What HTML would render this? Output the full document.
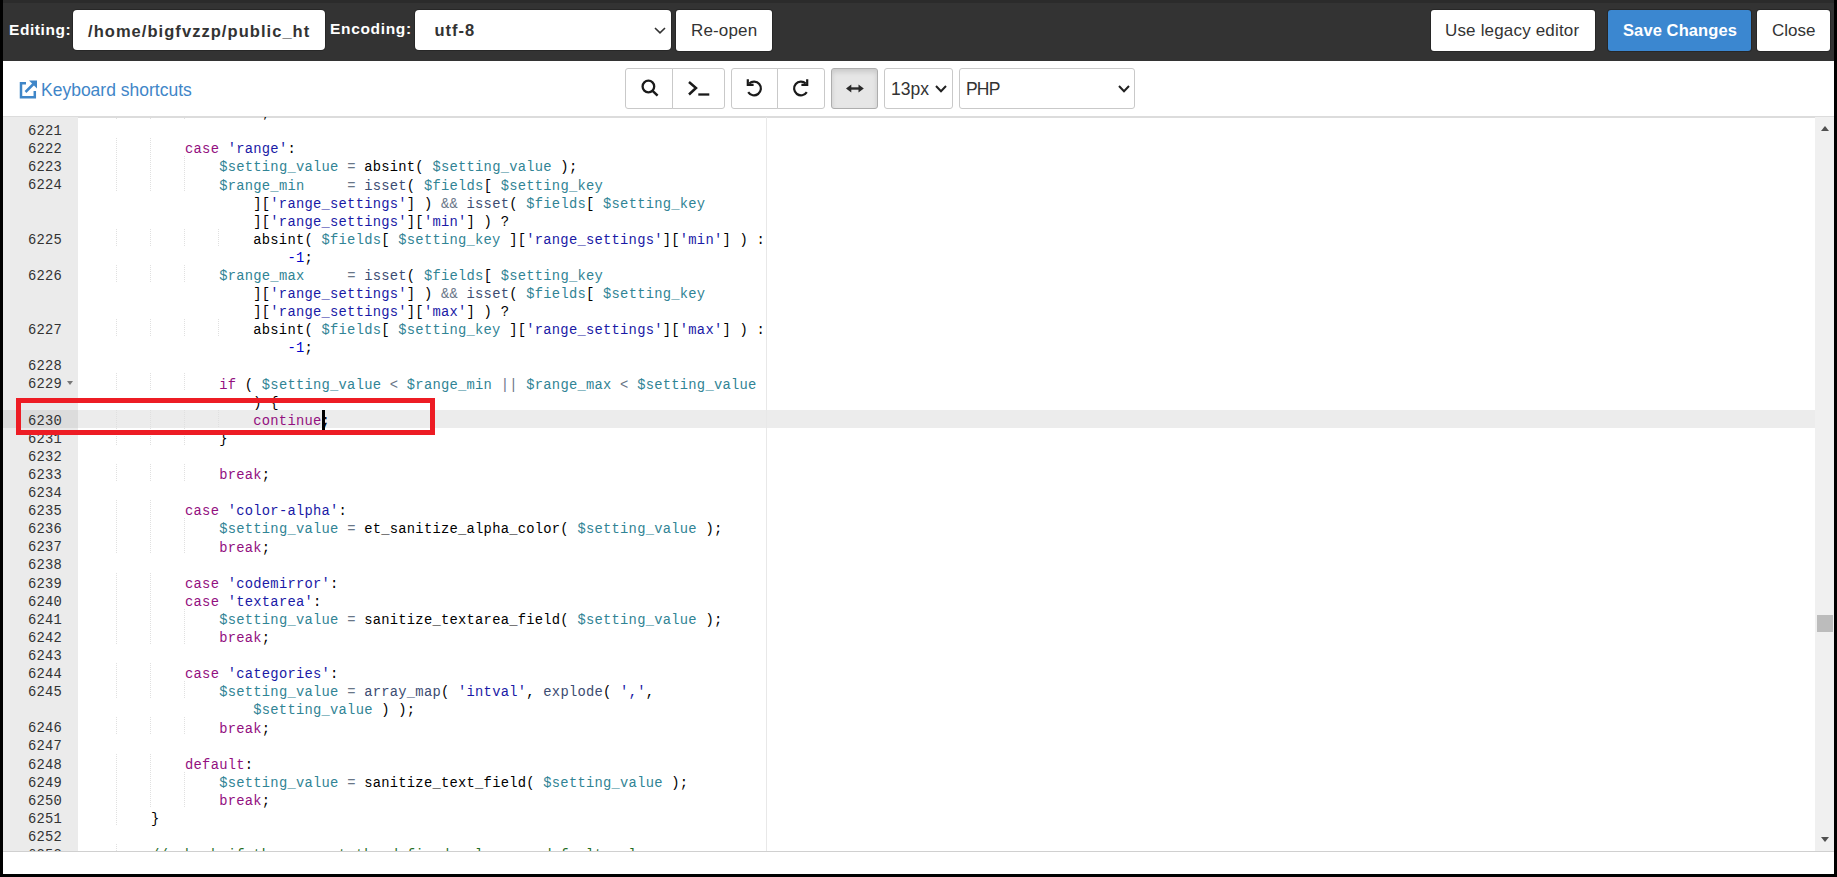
<!DOCTYPE html>
<html><head><meta charset="utf-8">
<style>
*{box-sizing:border-box}
html,body{margin:0;padding:0;width:1837px;height:877px;overflow:hidden;background:#fff}
body{position:relative;font-family:"Liberation Sans",sans-serif}
.abs{position:absolute}
#bl{position:absolute;left:0;top:0;width:3px;height:877px;background:#000}
#br{position:absolute;left:1834px;top:0;width:3px;height:877px;background:#000}
#bb{position:absolute;left:0;top:874px;width:1837px;height:3px;background:#000}
#hdr{position:absolute;left:3px;top:0;width:1831px;height:61px;background:#333}
#hdrtop{position:absolute;left:3px;top:0;width:1831px;height:3px;background:#2b2b2b}
.t{position:absolute;white-space:nowrap;line-height:1}
.lbl{color:#fff;font-weight:bold}
.box{position:absolute;background:#fff;border-radius:4px;box-shadow:0 0 0 1px #272727}
.btn{position:absolute;background:#fff;border-radius:3px;box-shadow:0 0 0 1px #272727}
.tbtn{position:absolute;border:1px solid #c9c9c9;background:#fff}
#tbline{position:absolute;left:3px;top:116px;width:1831px;height:2px;background:#dcdcdc}
#gutter{position:absolute;left:3px;top:117px;width:75px;height:734px;background:#ebebeb;overflow:hidden}
.g{position:absolute;left:0;width:75px;height:18.1px}
.g span{position:absolute;right:16px;top:3px;font-family:"Liberation Mono",monospace;font-size:13.8px;letter-spacing:0.25px;line-height:18.1px;color:#333}
.g.act{background:#dcdcdc}
.fold{position:absolute;left:64px;top:8px;width:0;height:0;border-left:3.5px solid transparent;border-right:3.5px solid transparent;border-top:4px solid #777}
#code{position:absolute;left:78px;top:117px;width:1737px;height:734px;overflow:hidden}
.actline{position:absolute;left:0;width:1737px;height:18.1px;background:#ececec}
.pm{position:absolute;left:688px;top:0;width:1px;height:734px;background:#e8e8e8}
.row{position:absolute;left:4.7px;height:18.1px;white-space:pre;font-family:"Liberation Mono",monospace;font-size:13.8px;letter-spacing:0.25px;line-height:18.1px;color:#000}
.ig{position:absolute;width:1px;height:18.1px;background-image:linear-gradient(#e0e0e0 50%,transparent 50%);background-size:1px 2px}
i{font-style:normal}
i.kw{color:#93107f} i.str{color:#1a1aa6} i.var{color:#318495} i.num{color:#0000cd} i.op{color:#687687} i.fn{color:#3c4c72} i.com{color:#236e24}
#sb{position:absolute;left:1815px;top:117px;width:19px;height:734px;background:#f0f0f0}
#sbthumb{position:absolute;left:2px;top:498px;width:16px;height:17px;background:#bcbcbc}
.arr{position:absolute;left:5.5px;width:0;height:0;border-left:4.5px solid transparent;border-right:4.5px solid transparent}
#cursor{position:absolute;width:2.5px;height:19.5px;background:#000}
#redbox{position:absolute;left:16px;top:398px;width:419px;height:37px;border:5px solid #ed1c24}
#botline{position:absolute;left:3px;top:851px;width:1831px;height:1px;background:#d0d0d0}
</style></head><body>
<div id="hdr"></div>
<div id="hdrtop"></div>
<div class="t lbl" style="left:9px;top:22px;font-size:15.5px;letter-spacing:0.58px">Editing:</div>
<div class="box" style="left:73px;top:10px;width:252px;height:40px"></div>
<div class="t" style="left:88px;top:22px;font-weight:bold;font-size:16.5px;color:#333;letter-spacing:1.05px;line-height:18px">/home/bigfvzzp/public_ht</div>
<div class="t lbl" style="left:330px;top:21px;font-size:15.5px;letter-spacing:0.67px">Encoding:</div>
<div class="box" style="left:415px;top:10px;width:256px;height:40px"></div>
<div class="t" style="left:434.5px;top:22px;font-weight:bold;font-size:16.5px;color:#333;letter-spacing:0.98px">utf-8</div>
<svg class="abs" style="left:653px;top:26px" width="14" height="9" viewBox="0 0 14 9"><path d="M2 2 L7 6.8 L12 2" fill="none" stroke="#333" stroke-width="1.6"/></svg>
<div class="btn" style="left:676px;top:10px;width:96px;height:41px"></div>
<div class="t" style="left:691px;top:22px;font-size:17px;color:#333;letter-spacing:0.15px">Re-open</div>
<div class="btn" style="left:1431px;top:10px;width:164px;height:41px"></div>
<div class="t" style="left:1445px;top:22px;font-size:17px;color:#333;letter-spacing:0.17px">Use legacy editor</div>
<div class="btn" style="left:1608px;top:10px;width:143px;height:41px;background:#3b87d0"></div>
<div class="t" style="left:1623px;top:22px;font-size:16.5px;font-weight:bold;color:#fff;letter-spacing:0.1px">Save Changes</div>
<div class="btn" style="left:1757px;top:10px;width:73px;height:41px"></div>
<div class="t" style="left:1772px;top:22px;font-size:17px;color:#333">Close</div>

<svg class="abs" style="left:18px;top:79px" width="20" height="20" viewBox="0 0 20 20"><path d="M8 4.3 H3 V18.2 H16.8 V12" fill="none" stroke="#3f86c8" stroke-width="2.5"/><path d="M7.5 13 L17 3.5" fill="none" stroke="#3f86c8" stroke-width="2.5"/><path d="M11 1.5 H19 V9.5 Z" fill="#3f86c8"/></svg>
<div class="t" style="left:41px;top:81.5px;font-size:17.5px;color:#3f86c8">Keyboard shortcuts</div>

<div class="tbtn" style="left:625px;top:68px;width:48px;height:41px;border-radius:3px 0 0 3px"></div>
<div class="tbtn" style="left:672px;top:68px;width:53px;height:41px;border-radius:0 3px 3px 0"></div>
<svg class="abs" style="left:638px;top:76px" width="24" height="24" viewBox="0 0 24 24"><circle cx="10.4" cy="10.5" r="5.8" fill="none" stroke="#1a1a1a" stroke-width="2.3"/><path d="M14.6 14.8 L19.6 19.6" stroke="#1a1a1a" stroke-width="2.5"/></svg>
<svg class="abs" style="left:684px;top:76px" width="30" height="24" viewBox="0 0 30 24"><path d="M5 6 L12 12 L5 18.5" fill="none" stroke="#1a1a1a" stroke-width="2.5"/><path d="M14.3 18.5 H25.3" stroke="#1a1a1a" stroke-width="2.3"/></svg>

<div class="tbtn" style="left:731px;top:68px;width:47px;height:41px;border-radius:3px 0 0 3px"></div>
<div class="tbtn" style="left:777px;top:68px;width:48px;height:41px;border-radius:0 3px 3px 0"></div>
<svg class="abs" style="left:742px;top:76px" width="24" height="24" viewBox="0 0 24 24"><path d="M7.2 7.5 A 6.9 6.9 0 1 1 6.2 16.2" fill="none" stroke="#1a1a1a" stroke-width="2.2"/><path d="M5.8 3.2 V8.8 H11.6" fill="none" stroke="#1a1a1a" stroke-width="2.2"/></svg>
<svg class="abs" style="left:789px;top:76px" width="24" height="24" viewBox="0 0 24 24"><path d="M16.8 7.5 A 6.9 6.9 0 1 0 17.8 16.2" fill="none" stroke="#1a1a1a" stroke-width="2.2"/><path d="M18.2 3.2 V8.8 H12.4" fill="none" stroke="#1a1a1a" stroke-width="2.2"/></svg>

<div class="tbtn" style="left:831px;top:68px;width:47px;height:41px;border-radius:3px;background:#e6e6e6;border-color:#adadad;box-shadow:inset 0 3px 5px rgba(0,0,0,.125)"></div>
<svg class="abs" style="left:843px;top:77px" width="24" height="24" viewBox="0 0 24 24"><path d="M6 11.5 H18" stroke="#2b2b2b" stroke-width="2.4"/><path d="M3 11.5 L8.3 7.6 V15.4 Z M20.8 11.5 L15.5 7.6 V15.4 Z" fill="#2b2b2b"/></svg>

<div class="tbtn" style="left:884px;top:68px;width:69px;height:41px;border-radius:3px"></div>
<div class="t" style="left:891px;top:81px;font-size:17.5px;color:#333">13px</div>
<svg class="abs" style="left:934px;top:83px" width="14" height="11" viewBox="0 0 14 11"><path d="M2 3 L7 8.2 L12 3" fill="none" stroke="#222" stroke-width="2"/></svg>
<div class="tbtn" style="left:959px;top:68px;width:176px;height:41px;border-radius:3px"></div>
<div class="t" style="left:966px;top:81px;font-size:17.5px;color:#333;letter-spacing:-0.8px">PHP</div>
<svg class="abs" style="left:1117px;top:83px" width="14" height="11" viewBox="0 0 14 11"><path d="M2 3 L7 8.2 L12 3" fill="none" stroke="#222" stroke-width="2"/></svg>

<div id="tbline"></div>
<div id="gutter">
<div class="g" style="top:-15.10px"><span>6220</span></div>
<div class="g" style="top:3.00px"><span>6221</span></div>
<div class="g" style="top:21.10px"><span>6222</span></div>
<div class="g" style="top:39.20px"><span>6223</span></div>
<div class="g" style="top:57.30px"><span>6224</span></div>
<div class="g" style="top:111.60px"><span>6225</span></div>
<div class="g" style="top:147.80px"><span>6226</span></div>
<div class="g" style="top:202.10px"><span>6227</span></div>
<div class="g" style="top:238.30px"><span>6228</span></div>
<div class="g" style="top:256.40px"><span>6229</span><b class="fold"></b></div>
<div class="g act" style="top:292.60px"><span>6230</span></div>
<div class="g" style="top:310.70px"><span>6231</span></div>
<div class="g" style="top:328.80px"><span>6232</span></div>
<div class="g" style="top:346.90px"><span>6233</span></div>
<div class="g" style="top:365.00px"><span>6234</span></div>
<div class="g" style="top:383.10px"><span>6235</span></div>
<div class="g" style="top:401.20px"><span>6236</span></div>
<div class="g" style="top:419.30px"><span>6237</span></div>
<div class="g" style="top:437.40px"><span>6238</span></div>
<div class="g" style="top:455.50px"><span>6239</span></div>
<div class="g" style="top:473.60px"><span>6240</span></div>
<div class="g" style="top:491.70px"><span>6241</span></div>
<div class="g" style="top:509.80px"><span>6242</span></div>
<div class="g" style="top:527.90px"><span>6243</span></div>
<div class="g" style="top:546.00px"><span>6244</span></div>
<div class="g" style="top:564.10px"><span>6245</span></div>
<div class="g" style="top:600.30px"><span>6246</span></div>
<div class="g" style="top:618.40px"><span>6247</span></div>
<div class="g" style="top:636.50px"><span>6248</span></div>
<div class="g" style="top:654.60px"><span>6249</span></div>
<div class="g" style="top:672.70px"><span>6250</span></div>
<div class="g" style="top:690.80px"><span>6251</span></div>
<div class="g" style="top:708.90px"><span>6252</span></div>
<div class="g" style="top:727.00px"><span>6253</span></div>
</div>
<div id="code">
 <div class="actline" style="top:292.6px"></div>
 <div class="pm"></div>
<div class="ig" style="left:37.62px;top:-15.10px"></div>
<div class="ig" style="left:71.74px;top:-15.10px"></div>
<div class="ig" style="left:105.86px;top:-15.10px"></div>
<div class="ig" style="left:37.62px;top:21.10px"></div>
<div class="ig" style="left:71.74px;top:21.10px"></div>
<div class="ig" style="left:37.62px;top:39.20px"></div>
<div class="ig" style="left:71.74px;top:39.20px"></div>
<div class="ig" style="left:105.86px;top:39.20px"></div>
<div class="ig" style="left:37.62px;top:57.30px"></div>
<div class="ig" style="left:71.74px;top:57.30px"></div>
<div class="ig" style="left:105.86px;top:57.30px"></div>
<div class="ig" style="left:37.62px;top:111.60px"></div>
<div class="ig" style="left:71.74px;top:111.60px"></div>
<div class="ig" style="left:105.86px;top:111.60px"></div>
<div class="ig" style="left:139.98px;top:111.60px"></div>
<div class="ig" style="left:37.62px;top:147.80px"></div>
<div class="ig" style="left:71.74px;top:147.80px"></div>
<div class="ig" style="left:105.86px;top:147.80px"></div>
<div class="ig" style="left:37.62px;top:202.10px"></div>
<div class="ig" style="left:71.74px;top:202.10px"></div>
<div class="ig" style="left:105.86px;top:202.10px"></div>
<div class="ig" style="left:139.98px;top:202.10px"></div>
<div class="ig" style="left:37.62px;top:256.40px"></div>
<div class="ig" style="left:71.74px;top:256.40px"></div>
<div class="ig" style="left:105.86px;top:256.40px"></div>
<div class="ig" style="left:37.62px;top:292.60px"></div>
<div class="ig" style="left:71.74px;top:292.60px"></div>
<div class="ig" style="left:105.86px;top:292.60px"></div>
<div class="ig" style="left:139.98px;top:292.60px"></div>
<div class="ig" style="left:37.62px;top:310.70px"></div>
<div class="ig" style="left:71.74px;top:310.70px"></div>
<div class="ig" style="left:105.86px;top:310.70px"></div>
<div class="ig" style="left:37.62px;top:346.90px"></div>
<div class="ig" style="left:71.74px;top:346.90px"></div>
<div class="ig" style="left:105.86px;top:346.90px"></div>
<div class="ig" style="left:37.62px;top:383.10px"></div>
<div class="ig" style="left:71.74px;top:383.10px"></div>
<div class="ig" style="left:37.62px;top:401.20px"></div>
<div class="ig" style="left:71.74px;top:401.20px"></div>
<div class="ig" style="left:105.86px;top:401.20px"></div>
<div class="ig" style="left:37.62px;top:419.30px"></div>
<div class="ig" style="left:71.74px;top:419.30px"></div>
<div class="ig" style="left:105.86px;top:419.30px"></div>
<div class="ig" style="left:37.62px;top:455.50px"></div>
<div class="ig" style="left:71.74px;top:455.50px"></div>
<div class="ig" style="left:37.62px;top:473.60px"></div>
<div class="ig" style="left:71.74px;top:473.60px"></div>
<div class="ig" style="left:37.62px;top:491.70px"></div>
<div class="ig" style="left:71.74px;top:491.70px"></div>
<div class="ig" style="left:105.86px;top:491.70px"></div>
<div class="ig" style="left:37.62px;top:509.80px"></div>
<div class="ig" style="left:71.74px;top:509.80px"></div>
<div class="ig" style="left:105.86px;top:509.80px"></div>
<div class="ig" style="left:37.62px;top:546.00px"></div>
<div class="ig" style="left:71.74px;top:546.00px"></div>
<div class="ig" style="left:37.62px;top:564.10px"></div>
<div class="ig" style="left:71.74px;top:564.10px"></div>
<div class="ig" style="left:105.86px;top:564.10px"></div>
<div class="ig" style="left:37.62px;top:600.30px"></div>
<div class="ig" style="left:71.74px;top:600.30px"></div>
<div class="ig" style="left:105.86px;top:600.30px"></div>
<div class="ig" style="left:37.62px;top:636.50px"></div>
<div class="ig" style="left:71.74px;top:636.50px"></div>
<div class="ig" style="left:37.62px;top:654.60px"></div>
<div class="ig" style="left:71.74px;top:654.60px"></div>
<div class="ig" style="left:105.86px;top:654.60px"></div>
<div class="ig" style="left:37.62px;top:672.70px"></div>
<div class="ig" style="left:71.74px;top:672.70px"></div>
<div class="ig" style="left:105.86px;top:672.70px"></div>
<div class="ig" style="left:37.62px;top:690.80px"></div>
<div class="ig" style="left:37.62px;top:727.00px"></div>
<div class="row" style="top:-11.90px">                <i class="kw">break</i>;</div>
<div class="row" style="top:6.20px"></div>
<div class="row" style="top:24.30px">            <i class="kw">case</i> <i class="str">&#x27;range&#x27;</i>:</div>
<div class="row" style="top:42.40px">                <i class="var">$setting_value</i> <i class="op">=</i> absint( <i class="var">$setting_value</i> );</div>
<div class="row" style="top:60.50px">                <i class="var">$range_min</i>     <i class="op">=</i> <i class="fn">isset</i>( <i class="var">$fields</i>[ <i class="var">$setting_key</i></div>
<div class="row" style="top:78.60px">                    ][<i class="str">&#x27;range_settings&#x27;</i>] ) <i class="op">&amp;&amp;</i> <i class="fn">isset</i>( <i class="var">$fields</i>[ <i class="var">$setting_key</i></div>
<div class="row" style="top:96.70px">                    ][<i class="str">&#x27;range_settings&#x27;</i>][<i class="str">&#x27;min&#x27;</i>] ) ?</div>
<div class="row" style="top:114.80px">                    absint( <i class="var">$fields</i>[ <i class="var">$setting_key</i> ][<i class="str">&#x27;range_settings&#x27;</i>][<i class="str">&#x27;min&#x27;</i>] ) :</div>
<div class="row" style="top:132.90px">                        <i class="num">-1</i>;</div>
<div class="row" style="top:151.00px">                <i class="var">$range_max</i>     <i class="op">=</i> <i class="fn">isset</i>( <i class="var">$fields</i>[ <i class="var">$setting_key</i></div>
<div class="row" style="top:169.10px">                    ][<i class="str">&#x27;range_settings&#x27;</i>] ) <i class="op">&amp;&amp;</i> <i class="fn">isset</i>( <i class="var">$fields</i>[ <i class="var">$setting_key</i></div>
<div class="row" style="top:187.20px">                    ][<i class="str">&#x27;range_settings&#x27;</i>][<i class="str">&#x27;max&#x27;</i>] ) ?</div>
<div class="row" style="top:205.30px">                    absint( <i class="var">$fields</i>[ <i class="var">$setting_key</i> ][<i class="str">&#x27;range_settings&#x27;</i>][<i class="str">&#x27;max&#x27;</i>] ) :</div>
<div class="row" style="top:223.40px">                        <i class="num">-1</i>;</div>
<div class="row" style="top:241.50px"></div>
<div class="row" style="top:259.60px">                <i class="kw">if</i> ( <i class="var">$setting_value</i> <i class="op">&lt;</i> <i class="var">$range_min</i> <i class="op">||</i> <i class="var">$range_max</i> <i class="op">&lt;</i> <i class="var">$setting_value</i></div>
<div class="row" style="top:277.70px">                    ) {</div>
<div class="row" style="top:295.80px">                    <i class="kw">continue</i>;</div>
<div class="row" style="top:313.90px">                }</div>
<div class="row" style="top:332.00px"></div>
<div class="row" style="top:350.10px">                <i class="kw">break</i>;</div>
<div class="row" style="top:368.20px"></div>
<div class="row" style="top:386.30px">            <i class="kw">case</i> <i class="str">&#x27;color-alpha&#x27;</i>:</div>
<div class="row" style="top:404.40px">                <i class="var">$setting_value</i> <i class="op">=</i> et_sanitize_alpha_color( <i class="var">$setting_value</i> );</div>
<div class="row" style="top:422.50px">                <i class="kw">break</i>;</div>
<div class="row" style="top:440.60px"></div>
<div class="row" style="top:458.70px">            <i class="kw">case</i> <i class="str">&#x27;codemirror&#x27;</i>:</div>
<div class="row" style="top:476.80px">            <i class="kw">case</i> <i class="str">&#x27;textarea&#x27;</i>:</div>
<div class="row" style="top:494.90px">                <i class="var">$setting_value</i> <i class="op">=</i> sanitize_textarea_field( <i class="var">$setting_value</i> );</div>
<div class="row" style="top:513.00px">                <i class="kw">break</i>;</div>
<div class="row" style="top:531.10px"></div>
<div class="row" style="top:549.20px">            <i class="kw">case</i> <i class="str">&#x27;categories&#x27;</i>:</div>
<div class="row" style="top:567.30px">                <i class="var">$setting_value</i> <i class="op">=</i> <i class="fn">array_map</i>( <i class="str">&#x27;intval&#x27;</i>, <i class="fn">explode</i>( <i class="str">&#x27;,&#x27;</i>,</div>
<div class="row" style="top:585.40px">                    <i class="var">$setting_value</i> ) );</div>
<div class="row" style="top:603.50px">                <i class="kw">break</i>;</div>
<div class="row" style="top:621.60px"></div>
<div class="row" style="top:639.70px">            <i class="kw">default</i>:</div>
<div class="row" style="top:657.80px">                <i class="var">$setting_value</i> <i class="op">=</i> sanitize_text_field( <i class="var">$setting_value</i> );</div>
<div class="row" style="top:675.90px">                <i class="kw">break</i>;</div>
<div class="row" style="top:694.00px">        }</div>
<div class="row" style="top:712.10px"></div>
<div class="row" style="top:730.20px">        <i class="com">// check if the current the defined value use default value</i></div>
 <div id="cursor" style="left:244px;top:293px"></div>
</div>
<div id="sb"><div class="arr" style="top:9px;border-bottom:5px solid #505050"></div><div id="sbthumb"></div><div class="arr" style="top:720px;border-top:5px solid #505050"></div></div>
<div id="botline"></div>
<div id="redbox"></div>
<div id="bl"></div><div id="br"></div><div id="bb"></div>
</body></html>
